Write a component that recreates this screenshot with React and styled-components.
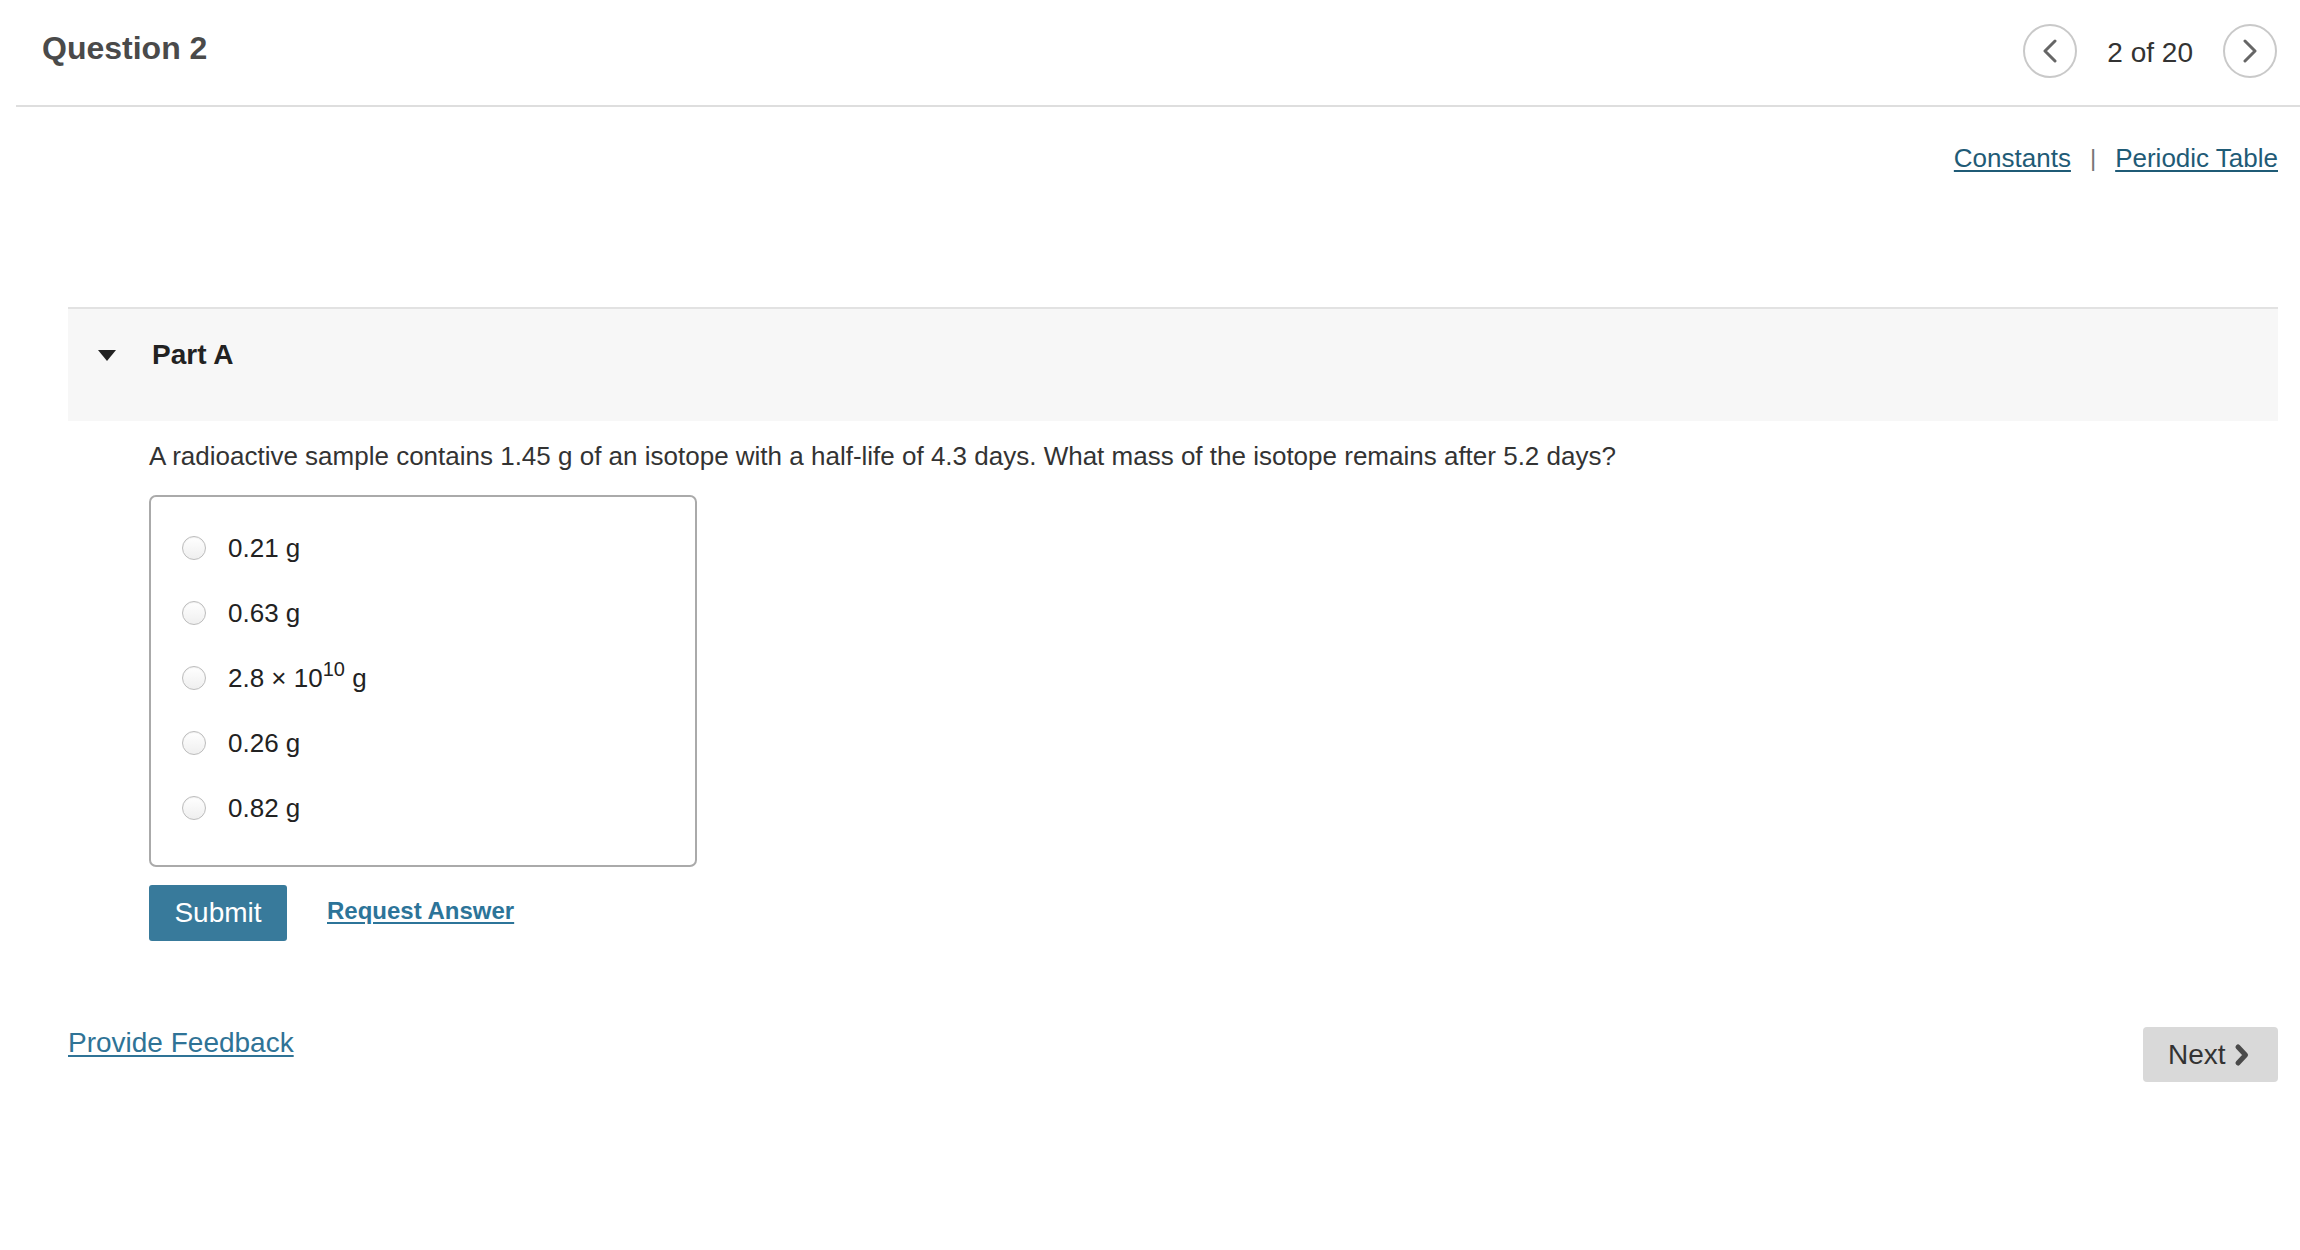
import React from 'react'
import styled, { createGlobalStyle } from 'styled-components'

const GlobalStyle = createGlobalStyle`
  body {
    margin: 0;
    background: #fff;
    font-family: "Liberation Sans", Helvetica, Arial, sans-serif;
    color: #333;
  }
`

const options = [
  { id: 'a', label: '0.21 g' },
  { id: 'b', label: '0.63 g' },
  { id: 'c', base: '2.8 × 10', exp: '10', unit: ' g' },
  { id: 'd', label: '0.26 g' },
  { id: 'e', label: '0.82 g' },
]

function Chevron({ dir }) {
  const pts = dir === 'left' ? '13,2 3,12 13,22' : '3,2 13,12 3,22'
  return (
    <svg width="16" height="24" viewBox="0 0 16 24">
      <polyline points={pts} fill="none" stroke="#666" strokeWidth="3" strokeLinecap="round" strokeLinejoin="round" />
    </svg>
  )
}

function App() {
  return (
    <React.Fragment>
      <GlobalStyle />
      <Header>
        <Title>Question 2</Title>
        <Pager>
          <CircleButton aria-label="previous"><Chevron dir="left" /></CircleButton>
          <PageCount>2 of 20</PageCount>
          <CircleButton aria-label="next"><Chevron dir="right" /></CircleButton>
        </Pager>
      </Header>
      <Main>
        <ToolLinks>
          <TealLink href="#">Constants</TealLink>
          <Divider>|</Divider>
          <TealLink href="#">Periodic Table</TealLink>
        </ToolLinks>

        <Part>
          <PartHeader>
            <Caret />
            <PartTitle>Part A</PartTitle>
          </PartHeader>
          <PartBody>
            <Prompt>
              A radioactive sample contains 1.45 g of an isotope with a half-life of 4.3 days. What mass of the isotope remains after 5.2 days?
            </Prompt>
            <Choices>
              {options.map((o) => (
                <Choice key={o.id}>
                  <Radio type="radio" name="partA" />
                  <ChoiceText>
                    {o.label ? o.label : (
                      <React.Fragment>{o.base}<Sup>{o.exp}</Sup>{o.unit}</React.Fragment>
                    )}
                  </ChoiceText>
                </Choice>
              ))}
            </Choices>
            <Actions>
              <SubmitButton>Submit</SubmitButton>
              <RequestLink href="#">Request Answer</RequestLink>
            </Actions>
          </PartBody>
        </Part>

        <Footer>
          <FeedbackLink href="#">Provide Feedback</FeedbackLink>
          <NextButton>
            Next
            <svg width="16" height="24" viewBox="0 0 16 24">
              <polyline points="4,4 11.5,12 4,20" fill="none" stroke="#4a4a4a" strokeWidth="5" strokeLinecap="round" strokeLinejoin="round" />
            </svg>
          </NextButton>
        </Footer>
      </Main>
    </React.Fragment>
  )
}

export default App

const Header = styled.header`
  display: flex;
  justify-content: space-between;
  align-items: flex-start;
  height: 105px;
  margin-left: 16px;
  padding: 0 23px 0 26px;
  border-bottom: 2px solid #dedede;
`

const Title = styled.h1`
  margin: 32px 0 0;
  font-size: 32px;
  line-height: 32px;
  font-weight: bold;
  color: #4a4a4a;
`

const Pager = styled.div`
  display: flex;
  align-items: center;
  gap: 30px;
  margin-top: 24px;
`

const CircleButton = styled.button`
  width: 54px;
  height: 54px;
  border-radius: 50%;
  border: 2px solid #c9c9c9;
  background: #fff;
  display: flex;
  align-items: center;
  justify-content: center;
  padding: 0;
`

const PageCount = styled.span`
  font-size: 28px;
  line-height: 32px;
  color: #333;
  padding-top: 4px;
`

const Main = styled.main`
  padding: 0 22px 0 68px;
`

const ToolLinks = styled.div`
  display: flex;
  justify-content: flex-end;
  align-items: center;
  margin-top: 36px;
  font-size: 26px;
  line-height: 30px;
`

const TealLink = styled.a`
  color: #1f5b76;
  text-decoration: underline;
  text-underline-offset: 3px;
`

const Divider = styled.span`
  color: #777;
  margin: 0 19px;
  font-size: 24px;
`

const Part = styled.section`
  margin-top: 134px;
`

const PartHeader = styled.div`
  display: flex;
  align-items: center;
  background: #f7f7f7;
  border-top: 2px solid #e2e2e2;
  padding: 30px 0 50px 30px;
`

const Caret = styled.span`
  width: 0;
  height: 0;
  border-left: 9.5px solid transparent;
  border-right: 9.5px solid transparent;
  border-top: 11px solid #222;
  margin-right: 36px;
`

const PartTitle = styled.h2`
  margin: 0;
  font-size: 28px;
  line-height: 32px;
  font-weight: bold;
  color: #222;
`

const PartBody = styled.div`
  padding: 20px 0 0 81px;
`

const Prompt = styled.p`
  margin: 0;
  font-size: 26px;
  line-height: 30px;
  color: #333;
`

const Choices = styled.div`
  box-sizing: border-box;
  width: 548px;
  margin-top: 24px;
  padding: 18px 0 25px 31px;
  border: 2px solid #aaa;
  border-radius: 7px;
`

const Choice = styled.label`
  display: flex;
  align-items: center;
  height: 65px;
  gap: 22px;
`

const Radio = styled.input`
  appearance: none;
  margin: 0;
  width: 24px;
  height: 24px;
  border-radius: 50%;
  border: 1px solid #bcbcbc;
  background: linear-gradient(#ffffff, #efefef);
  box-shadow: inset 0 1px 1px rgba(0, 0, 0, 0.06);
`

const ChoiceText = styled.span`
  font-size: 26px;
  line-height: 30px;
  color: #222;
`

const Sup = styled.sup`
  font-size: 20px;
  line-height: 0;
  vertical-align: 11px;
`

const Actions = styled.div`
  display: flex;
  align-items: center;
  gap: 40px;
  margin-top: 18px;
`

const SubmitButton = styled.button`
  width: 138px;
  height: 56px;
  border: none;
  border-radius: 3px;
  background: #387a9b;
  color: #fff;
  font-family: inherit;
  font-size: 28px;
`

const RequestLink = styled.a`
  font-size: 24px;
  font-weight: bold;
  color: #2c7499;
  text-decoration: underline;
  text-underline-offset: 3px;
  margin-top: -4px;
`

const Footer = styled.div`
  display: flex;
  justify-content: space-between;
  align-items: flex-start;
  margin-top: 86px;
`

const FeedbackLink = styled.a`
  font-size: 28px;
  line-height: 32px;
  color: #2f7396;
  text-decoration: underline;
  text-underline-offset: 3px;
`

const NextButton = styled.button`
  display: flex;
  align-items: center;
  gap: 8px;
  width: 135px;
  height: 55px;
  padding: 0 0 0 25px;
  border: none;
  border-radius: 4px;
  background: #d9d9d9;
  color: #333;
  font-family: inherit;
  font-size: 28px;
`
